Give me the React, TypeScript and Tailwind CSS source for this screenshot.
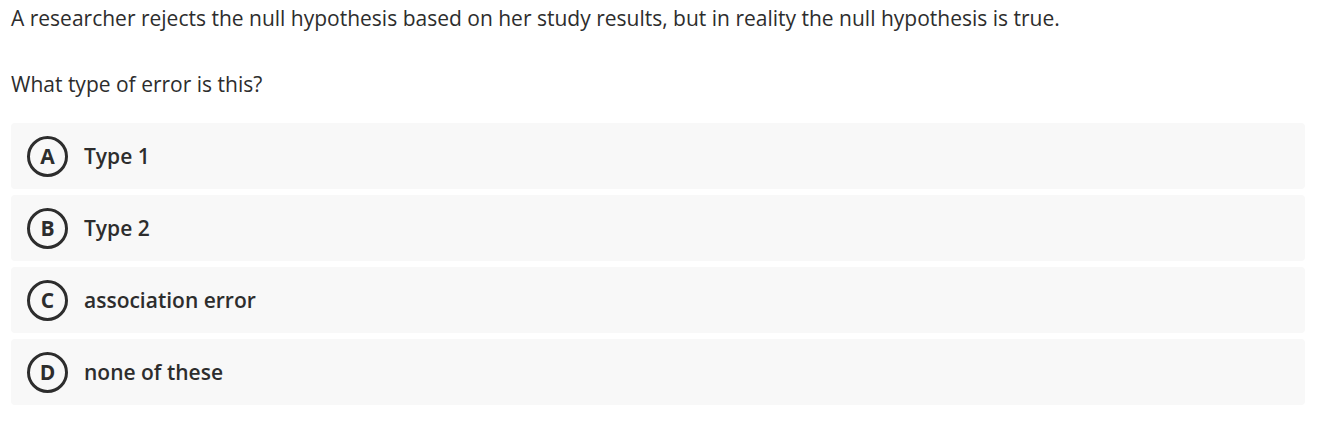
import React from "react";

const options = [
  { letter: "A", label: "Type 1" },
  { letter: "B", label: "Type 2" },
  { letter: "C", label: "association error" },
  { letter: "D", label: "none of these" },
];

export default function App() {
  return (
    <div
      className="bg-white text-[#2d2d2d] pl-[11px] pr-[25px] pt-[4px]"
      style={{ fontFamily: '"Open Sans", sans-serif' }}
    >
      <p className="text-[21px] leading-[28px]">
        A researcher rejects the null hypothesis based on her study results, but in reality the null hypothesis is true.
      </p>
      <p className="text-[21px] leading-[28px] mt-[38px]">What type of error is this?</p>

      <div className="mt-[25px] flex flex-col gap-[6px]">
        {options.map((o) => (
          <div
            key={o.letter}
            className="flex items-center h-[66px] rounded-[4px] bg-[#f8f8f8] pl-[16px]"
          >
            <span className="flex items-center justify-center w-[41px] h-[41px] rounded-full border-[3px] border-[#2d2d2d] text-[21px] font-bold leading-none">
              {o.letter}
            </span>
            <span className="ml-[16px] mt-[2px] text-[21px] font-semibold">{o.label}</span>
          </div>
        ))}
      </div>
    </div>
  );
}
